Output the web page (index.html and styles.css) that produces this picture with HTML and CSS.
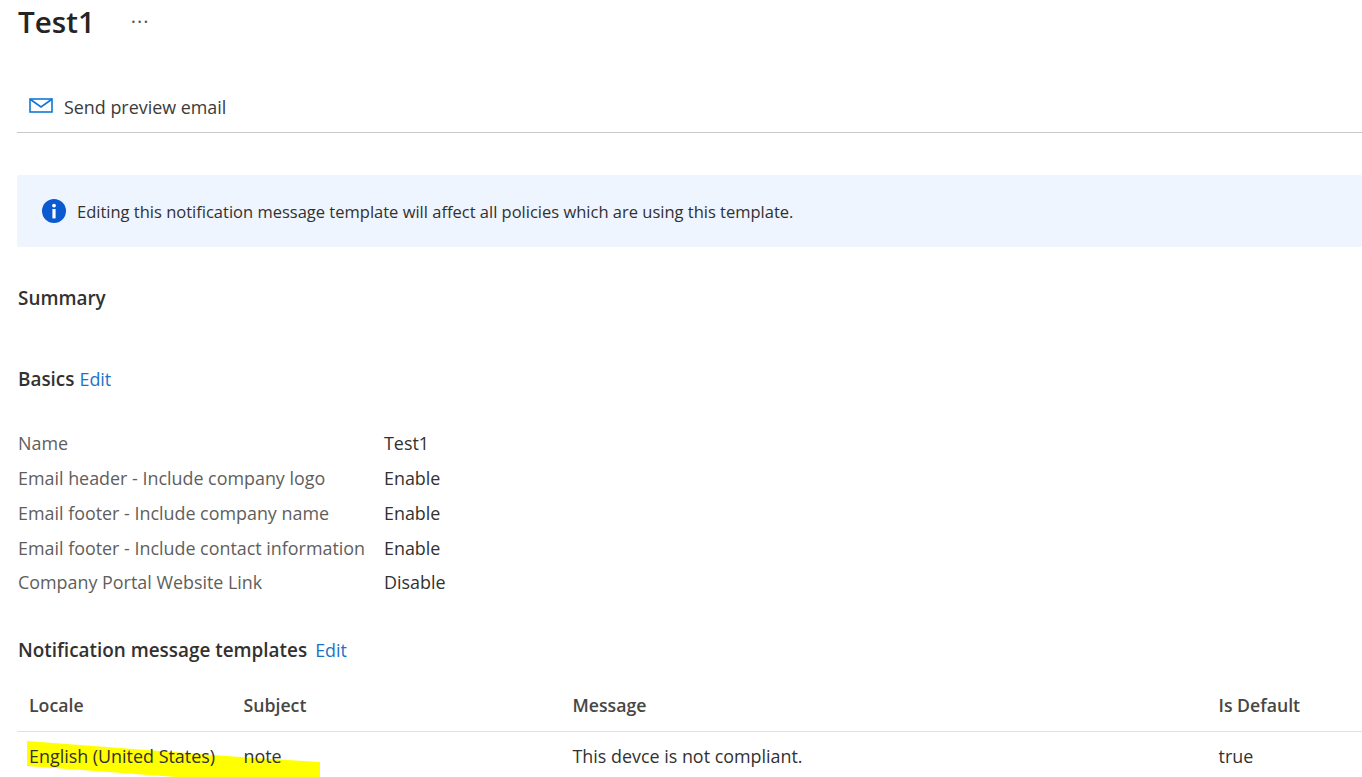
FILE: index.html
```html
<!DOCTYPE html>
<html lang="en">
<head>
    <meta charset="UTF-8">
    <meta name="viewport" content="width=device-width, initial-scale=1.0">
    <title>Test1</title>
    <link rel="stylesheet" href="styles.css">
</head>
<body>
    <div class="title-row">
        <h1>Test1</h1>
        <span class="more">&middot;&middot;&middot;</span>
    </div>

    <div class="toolbar">
        <svg class="mail-icon" width="24" height="16" viewBox="0 0 24 16" fill="none" stroke="#0f78d4" stroke-width="1.6">
            <rect x="1" y="1" width="22" height="13"/>
            <path d="M1.5 1.5 L12 9 L22.5 1.5"/>
        </svg>
        <span>Send preview email</span>
    </div>

    <div class="info-banner">
        <svg width="24" height="24" viewBox="0 0 24 24">
            <circle cx="12" cy="12" r="12" fill="#0b5ad0"/>
            <circle cx="12" cy="6.6" r="1.9" fill="#fff"/>
            <rect x="10.4" y="10" width="3.2" height="9.4" fill="#fff"/>
        </svg>
        <span>Editing this notification message template will affect all policies which are using this template.</span>
    </div>

    <h2 class="summary">Summary</h2>

    <div class="section-head basics-head">
        <h3>Basics</h3>
        <a href="#">Edit</a>
    </div>

    <div class="details">
        <div class="label">Name</div><div class="value">Test1</div>
        <div class="label">Email header - Include company logo</div><div class="value">Enable</div>
        <div class="label">Email footer - Include company name</div><div class="value">Enable</div>
        <div class="label">Email footer - Include contact information</div><div class="value">Enable</div>
        <div class="label">Company Portal Website Link</div><div class="value">Disable</div>
    </div>

    <div class="section-head templates-head">
        <h3>Notification message templates</h3>
        <a href="#">Edit</a>
    </div>

    <div class="table">
        <div class="table-row table-header">
            <div>Locale</div><div>Subject</div><div>Message</div><div>Is Default</div>
        </div>
        <div class="table-row">
            <div>English (United States)</div><div>note</div><div>This devce is not compliant.</div><div>true</div>
        </div>
    </div>

    <svg class="highlight" width="320" height="40" viewBox="0 0 320 40">
        <polygon points="27,4 213,18 240,20 320,25 320,40 176,40 27,29" fill="#ffff00"/>
    </svg>
</body>
</html>
```

FILE: styles.css
```css
html, body {
    height: 777px;
    overflow: hidden;
}
body {
    margin: 0;
    padding-left: 17px;
    font-family: "Open Sans", "Noto Sans", sans-serif;
    font-size: 17.9px;
    color: #323130;
    background: white;
    position: relative;
}
.title-row {
    display: flex;
    align-items: center;
    height: 42px;
    padding-left: 1px;
}
h1 {
    margin: 0;
    font-size: 29.6px;
    font-weight: 600;
    color: #252423;
}
.more {
    margin-left: 36px;
    font-size: 20px;
    color: #555;
    letter-spacing: 1px;
}
.toolbar {
    display: flex;
    align-items: center;
    gap: 11px;
    height: 45px;
    margin-top: 42px;
    padding: 0 0 3px 12px;
    border-bottom: 1px solid #c8c8c8;
    color: #3b3a39;
}
.mail-icon {
    margin-top: -2px;
}
.info-banner {
    display: flex;
    align-items: center;
    gap: 11px;
    height: 72px;
    margin-top: 42px;
    padding-left: 25px;
    background: #eef5fe;
    border-radius: 2px;
    font-size: 16.5px;
}
h2, h3 {
    margin: 0;
    font-size: 18.9px;
    font-weight: 600;
}
.summary {
    margin: 39px 0 0 1px;
    line-height: 24px;
}
.section-head {
    display: flex;
    align-items: center;
    height: 24px;
    margin-left: 1px;
}
.section-head a {
    color: #1a73c9;
    text-decoration: none;
}
.basics-head {
    gap: 5px;
    margin-top: 57px;
}
.templates-head {
    gap: 8px;
    margin-top: 38px;
}
.details {
    display: grid;
    grid-template-columns: 366px 1fr;
    grid-auto-rows: 34.75px;
    align-items: center;
    margin: 35px 0 0 1px;
}
.label {
    color: #605e5c;
}
.value {
    color: #323130;
}
.table {
    margin-top: 18px;
}
.table-row {
    display: grid;
    grid-template-columns: 214.5px 329px 646px 1fr;
    align-items: center;
    height: 48px;
    padding-left: 12px;
    position: relative;
    z-index: 1;
}
.table-header {
    height: 52px;
    font-size: 17.7px;
    font-weight: 600;
    border-bottom: 1px solid #e1e1e1;
    box-sizing: border-box;
    color: #484644;
}
.highlight {
    position: absolute;
    left: 0;
    top: 737px;
}
```
